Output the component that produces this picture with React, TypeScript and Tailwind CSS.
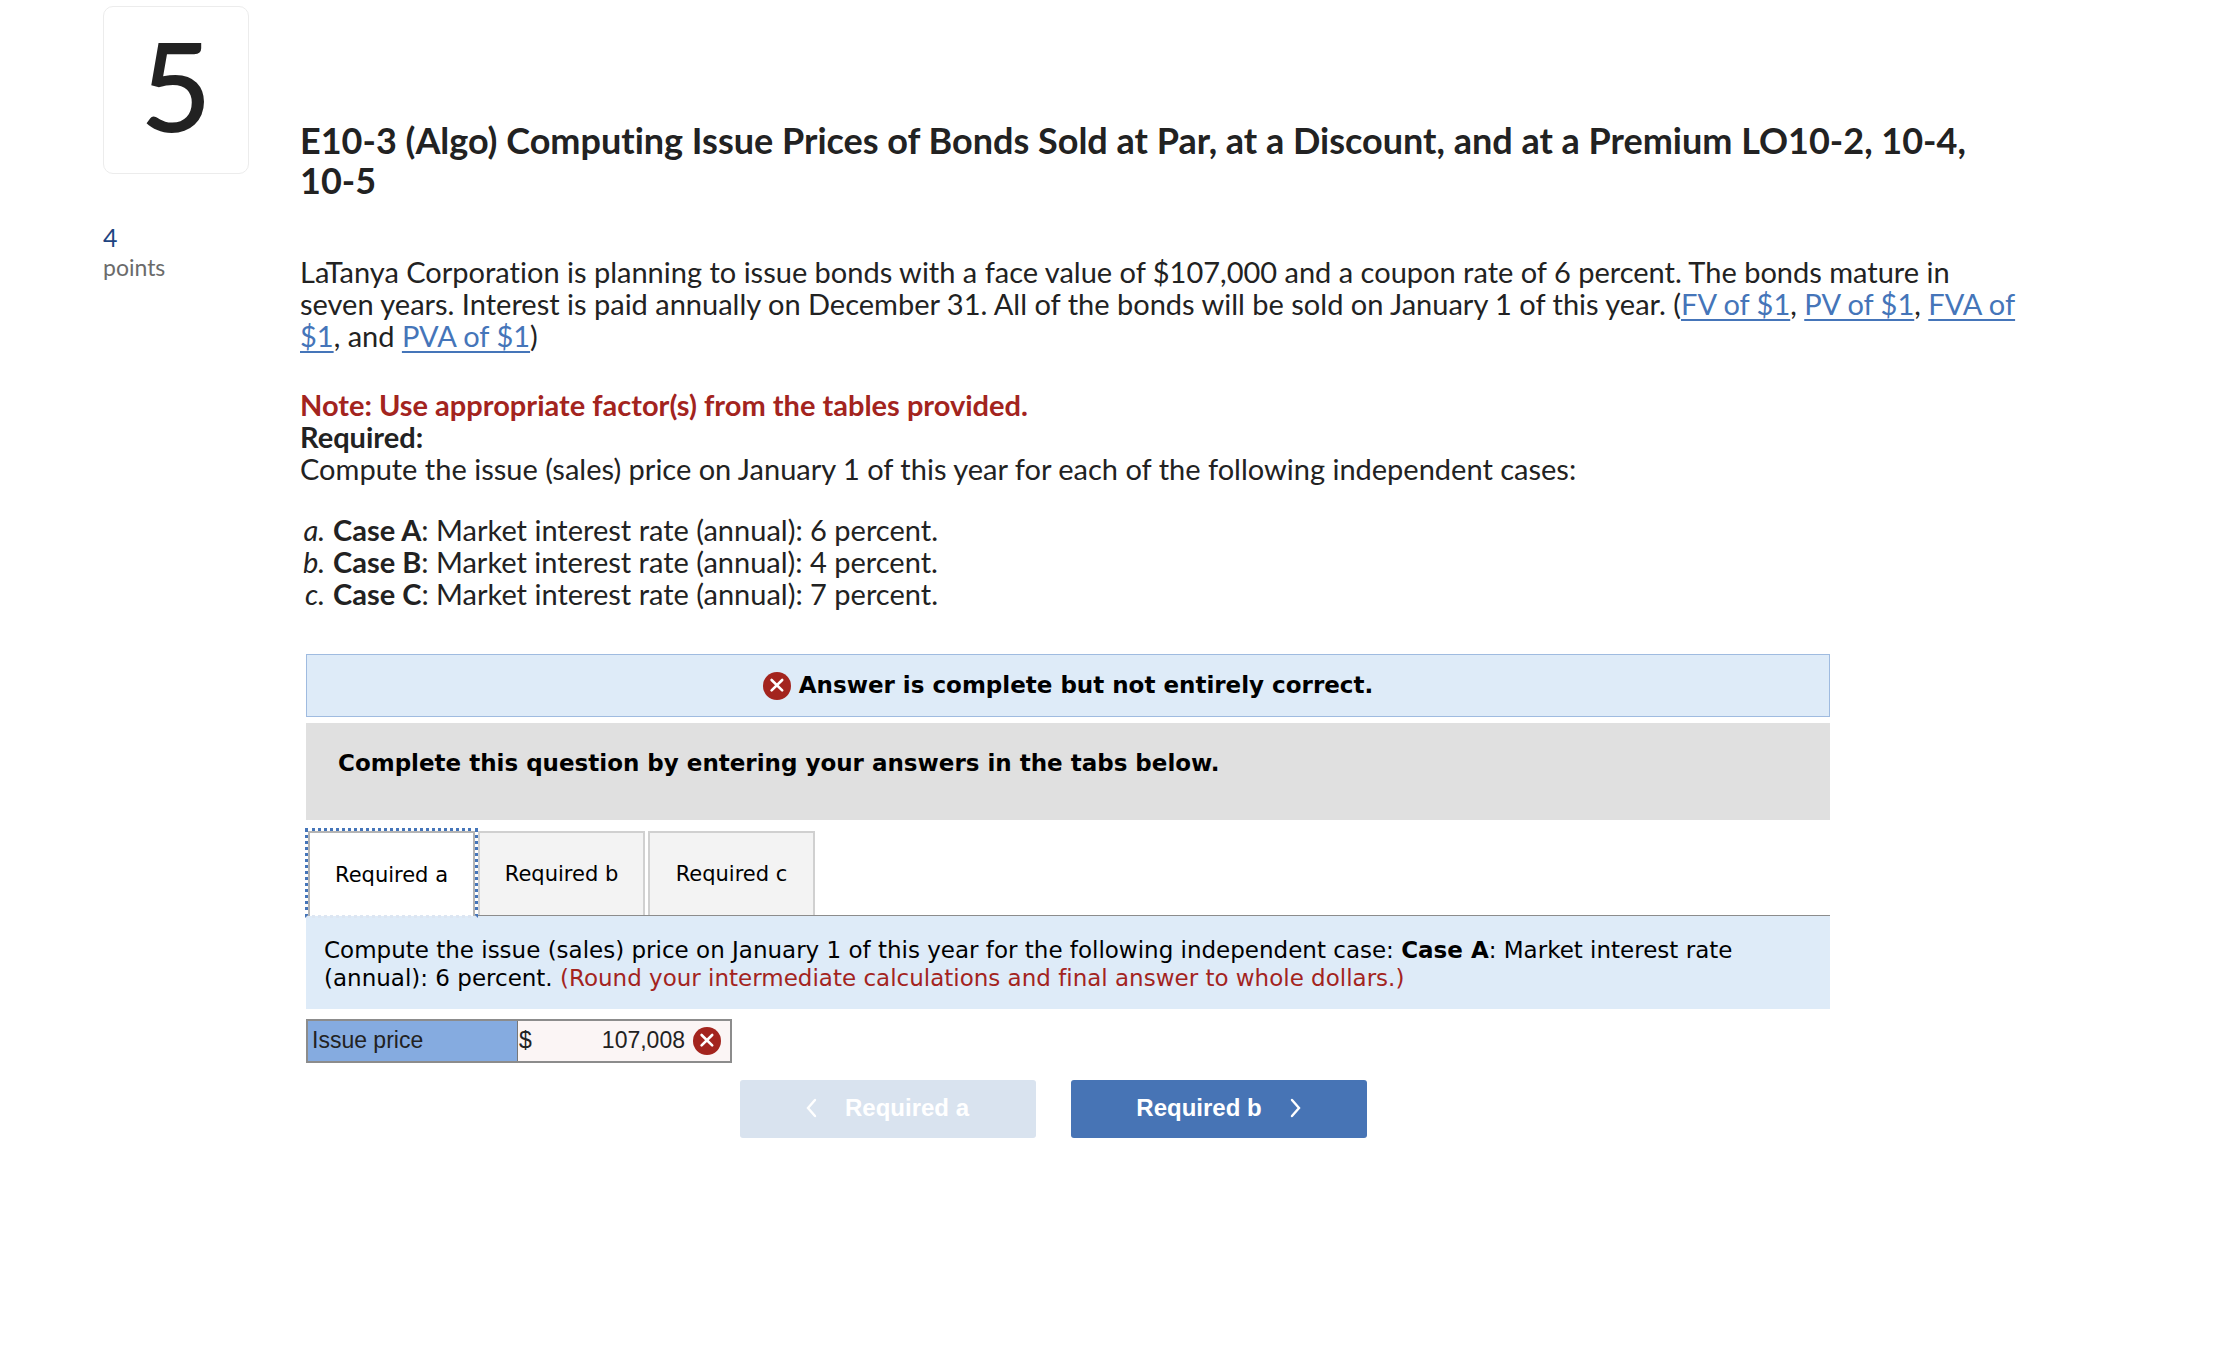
import React from "react";
import clsx from "clsx";

const cases = [
    { id: "a", name: "Case A", rate: 6, answer: "107,008" },
    { id: "b", name: "Case B", rate: 4, answer: "" },
    { id: "c", name: "Case C", rate: 7, answer: "" },
]

export default function App() {
    return (
        <div className="flex items-start gap-[51px] pl-[103px] pr-[200px] pt-[6px] pb-16 bg-white text-[#222] font-['Lato',sans-serif] [font-variant-ligatures:none]">
            <QuestionAside number={5} points={4} />

            <main className="flex-1 min-w-0 pt-[114px]">
                <h1 className="text-4xl leading-10 font-bold">
                    E10-3 (Algo) Computing Issue Prices of Bonds Sold at Par, at a Discount, and at a Premium LO10-2, 10-4, <br />
                    10-5
                </h1>

                <div className="mt-14 text-[29px] leading-8">
                    <p>
                        LaTanya Corporation is planning to issue bonds with a face value of $107,000 and a coupon rate of 6 percent. The bonds mature in <br />
                        seven years. Interest is paid annually on December 31. All of the bonds will be sold on January 1 of this year. (
                        <TableLink>FV of $1</TableLink>, <TableLink>PV of $1</TableLink>, <TableLink>FVA of <br />$1</TableLink>, and <TableLink>PVA of $1</TableLink>)
                    </p>

                    <p className="mt-[37px] font-bold text-[#a3241e]">Note: Use appropriate factor(s) from the tables provided.</p>
                    <p className="font-bold">Required:</p>
                    <p>Compute the issue (sales) price on January 1 of this year for each of the following independent cases:</p>

                    <ul className="mt-[29px]">
                        {
                            cases.map(({ id, name, rate }) => (
                                <li key={id} className="flex gap-2">
                                    <i className="w-[25px] text-right">{id}.</i>
                                    <span><b>{name}</b>: Market interest rate (annual): {rate} percent.</span>
                                </li>
                            ))
                        }
                    </ul>
                </div>

                <AnswerBox />
            </main>
        </div>
    )
}

function QuestionAside({ number, points }: { number: number, points: number }) {
    return (
        <aside className="w-[146px] shrink-0">
            <div className="h-[168px] pb-3 flex justify-center items-center border-[1px] border-[#ececec] rounded-[10px] text-[124px] leading-none font-medium">
                {number}
            </div>
            <p className="mt-[49px] text-[25px] leading-7 text-[#1d4481]">{points}</p>
            <p className="text-[23px] leading-8 text-[#6b6b6b]">points</p>
        </aside>
    )
}

function TableLink({ children }: { children: React.ReactNode }) {
    return (
        <a href="#" className="text-[#4575b9] underline decoration-2 underline-offset-4 [text-decoration-skip-ink:none]">{children}</a>
    )
}

function AnswerBox() {
    const [active, setActive] = React.useState(0)
    const [answers, setAnswers] = React.useState(cases.map((c) => c.answer))
    const current = cases[active]
    const prev = cases[Math.max(active - 1, 0)]
    const next = cases[Math.min(active + 1, cases.length - 1)]

    return (
        <section className="mt-11 ml-[6px] mr-[202px] text-black font-['DejaVu_Sans',Verdana,sans-serif]">
            <div className="h-[63px] flex justify-center items-center gap-2 border-[1px] border-[#9fbbe0] bg-[#deebf8] text-[23px] font-bold">
                <WrongIcon />
                <p>Answer is complete but not entirely correct.</p>
            </div>

            <div className="mt-[6px] pt-[26px] pb-[43px] pl-8 bg-[#e0e0e0] text-[23px] leading-7 font-bold">
                Complete this question by entering your answers in the tabs below.
            </div>

            <div role="tablist" className="mt-[11px] pl-[2px] flex gap-[3px] border-b-[1px] border-[#8c8c8c]">
                {
                    cases.map(({ id }, index) => (
                        <button
                        key={id}
                        role="tab"
                        aria-selected={index === active}
                        onClick={() => setActive(index)}
                        className={clsx(
                            "relative w-[167px] border-2 border-b-0 pt-[2px] text-[21px] outline-0",
                            index === active ? "-mb-[1px] h-[85px] border-[#b4b4b4] bg-white" : "h-[84px] border-[#d0d0d0] bg-[#f3f3f3]"
                        )}
                        >
                            Required {id}
                            {index === active && <span className="absolute -inset-x-[5px] -top-[5px] -bottom-[2px] border-[3px] border-dotted border-[#4575b9] border-b-[#dde6f2]" />}
                        </button>
                    ))
                }
            </div>

            <div role="tabpanel">
                <p className="pt-5 pb-[17px] px-[18px] bg-[#deebf8] text-[23px] leading-7">
                    Compute the issue (sales) price on January 1 of this year for the following independent case: <b>{current.name}</b>: Market interest rate <br />
                    (annual): {current.rate} percent. <span className="text-[#a3241e]">(Round your intermediate calculations and final answer to whole dollars.)</span>
                </p>

                <div className="mt-[10px] w-[426px] h-11 flex border-2 border-[#8c8c8c] text-[23px] text-[#222] font-['Liberation_Sans',Arial,sans-serif]">
                    <label htmlFor="issue-price" className="w-[210px] shrink-0 flex items-center pl-1 pb-[2px] border-r-[1px] border-[#777] bg-[#85abe0]">Issue price</label>
                    <div className="flex-1 min-w-0 flex items-center gap-2 pl-[1px] pr-[9px] bg-[#fbf5f5]">
                        <span className="pb-[2px]">$</span>
                        <input
                        id="issue-price"
                        type="text"
                        value={answers[active]}
                        onChange={(e) => setAnswers(answers.map((a, i) => i === active ? e.target.value : a))}
                        className="flex-1 min-w-0 pb-[2px] bg-transparent text-right outline-0"
                        />
                        <WrongIcon />
                    </div>
                </div>
            </div>

            <div className="mt-[17px] pr-[30px] flex justify-center gap-[35px] text-2xl text-white font-bold font-['Liberation_Sans',Arial,sans-serif]">
                <button
                disabled={active === 0}
                onClick={() => setActive(active - 1)}
                className="w-[296px] h-[58px] pb-[2px] flex justify-center items-center gap-7 rounded-[3px] bg-[#4774b5] disabled:bg-[#d9e3ef]"
                >
                    <Chevron d="M9 2 L2 10 L9 18" />
                    Required {prev.id}
                </button>
                <button
                disabled={active === cases.length - 1}
                onClick={() => setActive(active + 1)}
                className="w-[296px] h-[58px] pb-[2px] flex justify-center items-center gap-7 rounded-[3px] bg-[#4774b5] disabled:bg-[#d9e3ef]"
                >
                    Required {next.id}
                    <Chevron d="M2 2 L9 10 L2 18" />
                </button>
            </div>
        </section>
    )
}

function WrongIcon() {
    return (
        <svg className="w-7 h-7 shrink-0" viewBox="0 0 28 28" fill="none">
            <circle cx="14" cy="14" r="14" fill="#a3241e" />
            <path d="M8.6 8 L19.2 18.4 M19.2 8 L8.6 18.4" stroke="#fff" strokeWidth="2.6" strokeLinecap="round" />
        </svg>
    )
}

function Chevron({ d }: { d: string }) {
    return (
        <svg className="w-[11px] h-5" viewBox="0 0 11 20" fill="none">
            <path d={d} stroke="#fff" strokeWidth="2.4" strokeLinecap="round" />
        </svg>
    )
}
